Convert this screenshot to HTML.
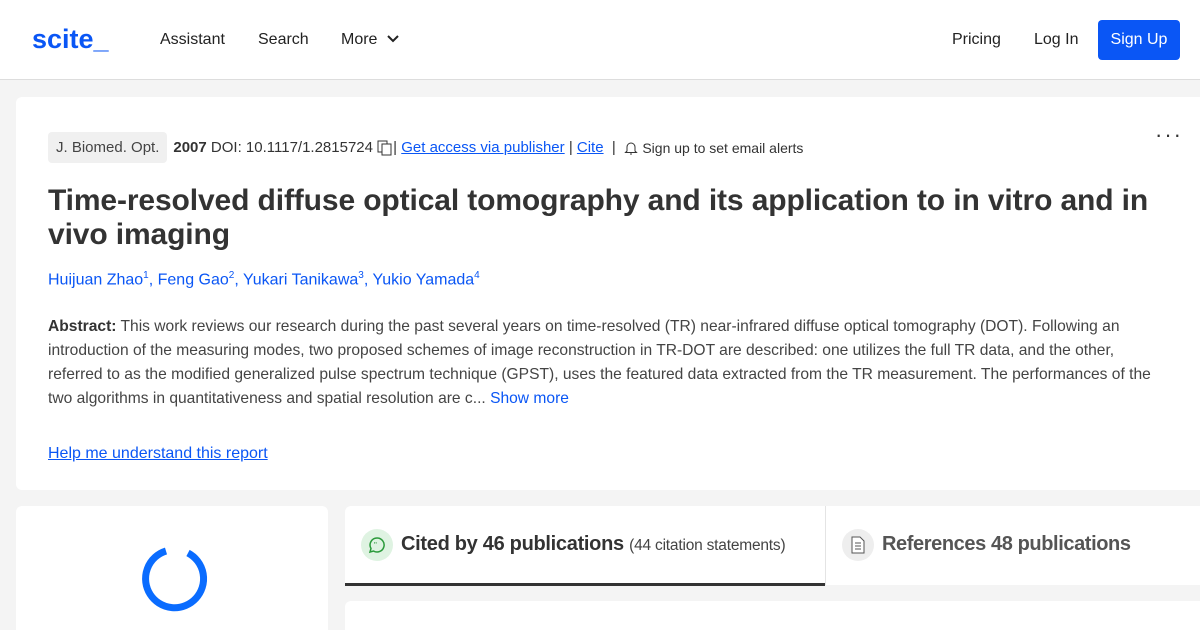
<!DOCTYPE html>
<html><head><meta charset="utf-8"><style>
*{box-sizing:border-box;margin:0;padding:0}
html,body{width:1200px;height:630px;overflow:hidden}
body{background:#f4f4f4;font-family:"Liberation Sans",sans-serif;color:#333;position:relative}
.hdr{position:absolute;left:0;top:0;width:1200px;height:80px;background:#fff;border-bottom:1px solid #ddd}
.logo{position:absolute;left:32px;top:24px;font-size:27px;font-weight:bold;color:#0a56f5}
.nav{position:absolute;top:31px;font-size:16px;color:#222}
.btn{position:absolute;left:1098px;top:20px;width:82px;height:40px;background:#0a56f5;color:#fff;border-radius:4px;font-size:16px;text-align:center;line-height:40px}
.card{position:absolute;background:#fff;border-radius:6px}
a{color:#0a56f5}
.meta{position:absolute;left:48px;top:132px;height:31px;font-size:15px;display:flex;align-items:center;color:#333;white-space:nowrap}
.tag{background:#f0f0f0;border-radius:4px;padding:0 8px;height:31px;line-height:31px;margin-right:6px;color:#444}
h1{position:absolute;left:48px;top:184px;width:1130px;font-size:30px;line-height:34px;font-weight:bold;color:#333;letter-spacing:-0.12px}
.auth{position:absolute;left:48px;top:270px;font-size:16px;color:#0a56f5}
.auth sup{font-size:10px}
.abs{position:absolute;left:48px;top:315px;width:1120px;font-size:15.6px;line-height:24px;color:#444}
</style></head><body>
<div class="hdr">
<div class="logo">scite_</div>
<div class="nav" style="left:160px">Assistant</div>
<div class="nav" style="left:258px">Search</div>
<div class="nav" style="left:341px">More <svg width="14" height="10" viewBox="0 0 14 10" style="margin-left:4px"><path d="M2 2l5 5 5-5" stroke="#222" stroke-width="2" fill="none"/></svg></div>
<div class="nav" style="left:952px">Pricing</div>
<div class="nav" style="left:1034px">Log In</div>
<div class="btn">Sign Up</div>
</div>
<div class="card" style="left:16px;top:97px;width:1200px;height:393px"></div>
<div style="position:absolute;left:1155px;top:122px;font-size:22px;letter-spacing:2px;color:#333">···</div>
<div class="meta"><span class="tag">J. Biomed. Opt.</span><b>2007</b>&nbsp;DOI: 10.1117/1.2815724&nbsp;
<svg width="16" height="16" viewBox="0 0 16 16"><rect x="1" y="1" width="9" height="11" fill="none" stroke="#333"/><rect x="5" y="4" width="9" height="11" fill="#fff" stroke="#333"/></svg>|&nbsp;<a href="#">Get access via publisher</a>&nbsp;|&nbsp;<a href="#">Cite</a>&nbsp;&nbsp;|&nbsp;&nbsp;
<svg width="14" height="16" viewBox="0 0 14 16"><path d="M3 11V7a4 4 0 0 1 8 0v4l1.5 1.5h-11z M6 14h2" fill="none" stroke="#333"/></svg>&nbsp;<span style="font-size:14px">Sign up to set email alerts</span></div>
<h1>Time-resolved diffuse optical tomography and its application to in vitro and in vivo imaging</h1>
<div class="auth">Huijuan Zhao<sup>1</sup>, Feng Gao<sup>2</sup>, Yukari Tanikawa<sup>3</sup>, Yukio Yamada<sup>4</sup></div>
<div class="abs"><b style="color:#333">Abstract:</b> This work reviews our research during the past several years on time-resolved (TR) near-infrared diffuse optical tomography (DOT). Following an introduction of the measuring modes, two proposed schemes of image reconstruction in TR-DOT are described: one utilizes the full TR data, and the other, referred to as the modified generalized pulse spectrum technique (GPST), uses the featured data extracted from the TR measurement. The performances of the two algorithms in quantitativeness and spatial resolution are c... <span style="color:#0a56f5">Show more</span></div>
<div style="position:absolute;left:48px;top:445px;font-size:16px"><a href="#">Help me understand this report</a></div>
<div class="card" style="left:16px;top:506px;width:312px;height:140px"></div>
<svg style="position:absolute;left:138px;top:544px" width="70" height="70" viewBox="0 0 70 70"><path d="M50 9A29 29 0 1 1 28 7" fill="none" stroke="#0a6cff" stroke-width="7"/></svg>
<div class="card" style="left:345px;top:506px;width:870px;height:79px;border-radius:6px 0 0 0"></div>
<div style="position:absolute;left:825px;top:506px;width:1px;height:79px;background:#e4e4e4"></div>
<div style="position:absolute;left:345px;top:583px;width:480px;height:3px;background:#333"></div>
<div style="position:absolute;left:361px;top:529px;width:32px;height:32px;border-radius:50%;background:#dff3e2"></div>
<svg style="position:absolute;left:367px;top:535px" width="20" height="20" viewBox="0 0 20 20"><path d="M10 3a7 7 0 1 1-3.5 13L3 17l1-3.5A7 7 0 0 1 10 3z" fill="none" stroke="#2a9a3a" stroke-width="1.5"/><text x="7" y="13" font-size="8" fill="#2a9a3a" font-family="Liberation Sans">"</text></svg>
<div style="position:absolute;left:401px;top:533px;font-size:20px;font-weight:bold;color:#333;letter-spacing:-0.3px">Cited by 46 publications <span style="font-weight:normal;font-size:15.5px;color:#444;letter-spacing:-0.2px">(44 citation statements)</span></div>
<div style="position:absolute;left:842px;top:529px;width:32px;height:32px;border-radius:50%;background:#eee"></div>
<svg style="position:absolute;left:849px;top:535px" width="18" height="20" viewBox="0 0 18 20"><path d="M3 2h8l4 4v12H3z" fill="#fff" stroke="#555"/><path d="M6 8h6M6 11h6M6 14h6" stroke="#555"/></svg>
<div style="position:absolute;left:882px;top:533px;font-size:20px;font-weight:bold;color:#555;letter-spacing:-0.4px">References 48 publications</div>
<div class="card" style="left:345px;top:601px;width:870px;height:60px"></div>
</body></html>
